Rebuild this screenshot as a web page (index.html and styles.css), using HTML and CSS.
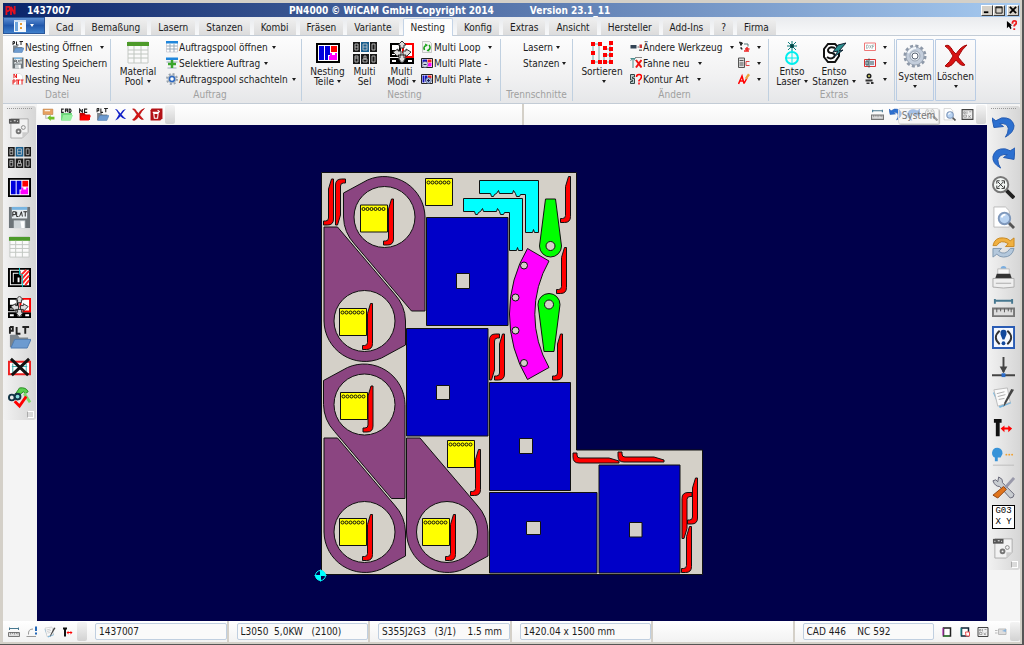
FILE: index.html
```
<!DOCTYPE html>
<html lang="de">
<head>
    <meta charset="UTF-8">
    <meta name="viewport" content="width=device-width, initial-scale=1.0">
    <title>PN4000</title>
    <link rel="stylesheet" href="styles.css">
</head>

<body>
    <!-- icons -->
    <svg class="defs" aria-hidden="true">
        <symbol id="i-folder" viewBox="0 0 24 24">
            <path d="M2 22V9h8l2 3h9v3H8L5 22z" fill="#7d858c"/>
            <path d="M7 14h17l-4 9H3z" fill="#6d9bd0" stroke="#4f7cb2"/>
            <path d="M2 1v7M2 1h3v4H2M9 1v7h4M15 1h7M18 1v7" fill="none" stroke="#222" stroke-width="2"/>
        </symbol>
        <symbol id="i-cadfolder" viewBox="0 0 24 24">
            <path d="M2 22V9h20v5l-3 9H2z" fill="#6fd67c"/>
            <path d="M6 13h18l-4 10H3z" fill="#98f0a0"/>
            <path d="M7 2H3v6h4M10 8V2h4v6M10 5h4M17 2v6h2q3-3 0-6z" fill="none" stroke="#222" stroke-width="2"/>
        </symbol>
        <symbol id="i-ncfolder" viewBox="0 0 24 24">
            <path d="M3 22V9h9l2 3h8v10z" fill="#c00"/>
            <path d="M7 14h17l-4 9H3z" fill="#f00"/>
            <path d="M3 9V2l5 6V2M17 2h-5v6h5" fill="none" stroke="#222" stroke-width="2"/>
        </symbol>
        <symbol id="i-save" viewBox="0 0 24 24">
            <path d="M1 1h22v22H1z" fill="#6d7478"/>
            <path d="M4 1h16v12H4z" fill="#e8eef2"/>
            <path d="M4 1h16v3H4z" fill="#78b4e0"/>
            <path d="M5 6v5M5 6h3v3H5M9 6v5h2M12 11l2-5 1 5M16 6h4M18 6v5" fill="none" stroke="#222"/>
            <path d="M6 15h12v8H6z" fill="#cfd5d8"/>
            <path d="M13 16h4v7h-3z" fill="#fff"/>
        </symbol>
        <symbol id="i-new" viewBox="0 0 24 24">
            <path d="M3 1h13l5 5v17H3z" fill="#fff" stroke="#ccc"/>
            <path d="M4 10V2l5 8V2M2 14v9M2 14h4v4H2M10 14v9M8 14h8M13 14v9M17 14h6M20 14v9" fill="none" stroke="#e22" stroke-width="2"/>
        </symbol>
        <symbol id="i-table" viewBox="0 0 24 24">
            <path d="M2 1h20v21H2z" fill="#fafafa" stroke="#c4c8c4"/>
            <path d="M1 1h22v4H1z" fill="#4d9a2a"/>
            <path d="M2 9h20M2 13h20M2 17h20M8 5v17M15 5v17" stroke="#c0c6c0"/>
        </symbol>
        <symbol id="i-tableblue" viewBox="0 0 24 24">
            <path d="M1 2h22v20H1z" fill="#fff" stroke="#aab"/>
            <path d="M0 0h24v5H0z" fill="#1f86dc"/>
            <path d="M1 10h22M1 16h22M8 5v17M16 5v17" stroke="#9ab" stroke-width="2"/>
        </symbol>
        <symbol id="i-tableplus" viewBox="0 0 24 24">
            <path d="M0 1h24v5H0z" fill="#1f86dc"/>
            <path d="M1 10h22M3 22h18" stroke="#9ab" stroke-width="2"/>
            <path d="M12 6v16M4 14h16" stroke="#39a52b" stroke-width="5"/>
        </symbol>
        <symbol id="i-gear" viewBox="0 0 24 24">
            <circle cx="12" cy="12" r="10" fill="none" stroke="#8d98a8" stroke-width="3" stroke-dasharray="3 2.24"/>
            <circle cx="12" cy="12" r="9" fill="#c3cddb" stroke="#9aa5b4"/>
            <path d="M5 9q3-5 8-5" fill="none" stroke="#f4f8fc" stroke-width="2"/>
            <circle cx="12" cy="12" r="5" fill="#e4eaf1" stroke="#9aa5b4"/>
            <circle cx="12" cy="12" r="3" fill="#fff" stroke="#5a6574"/>
        </symbol>
        <symbol id="i-gearblue" viewBox="0 0 24 24">
            <circle cx="12" cy="12" r="10" fill="none" stroke="#9aa4ae" stroke-width="4" stroke-dasharray="4 3.85"/>
            <circle cx="12" cy="12" r="8" fill="#c8d2dc" stroke="#8a95a0"/>
            <circle cx="12" cy="12" r="5" fill="#fff" stroke="#2c68c0" stroke-width="3"/>
        </symbol>
        <symbol id="i-nest" viewBox="0 0 24 20">
            <path d="M1 1h22v18H1z" fill="#fff" stroke="#000" stroke-width="2"/>
            <path d="M3 3h5v14H3zM9 3h5v9H9zM9 12h3v5H9z" fill="#00d"/>
            <path d="M15 3h6v6h-6z" fill="#f00"/>
            <path d="M14 10h2v2h3v-2h2v7h-8v-4h1z" fill="#f0f"/>
        </symbol>
        <symbol id="i-sel" viewBox="0 0 24 24">
            <path d="M0 1h7v10H0zM17 1h7v10h-7zM0 13h7v10H0zM8 13h8v10H8zM17 13h7v10h-7z" fill="#1a1a1a"/>
            <path d="M8 1h8v10H8z" fill="#1a6090"/>
            <path d="M2 3h3v6H2zM2 6h3M10 3h4v6h-4zM10 6h4M19 3h3v6h-3zM2 15h3v6H2zM2 17h3M11 15h2v3h-2zM10 18h4v3h-4zM19 15h3v6h-3z" fill="none" stroke="#ccc" stroke-width=".8"/>
        </symbol>
        <symbol id="i-modi" viewBox="0 0 24 24">
            <path d="M1 3h9v7H1zM1 12h7v3H1zM1 18h6v4H1zM9 18h6v4H9zM17 18h6v4h-6z" fill="#fff" stroke="#000" stroke-width="2"/>
            <path d="M13 3h10v13h-7v-5h-3z" fill="#fff" stroke="#f00" stroke-width="2"/>
            <path d="M12 0l4 4h-2v3h-4V4H8zM3 11l5-3v2h3v4H8v2zM21 11l-5-3v2h-3v4h3v2zM12 22l-4-5h2v-3h4v3h2z" fill="#ddd" stroke="#333"/>
        </symbol>
        <symbol id="i-loop" viewBox="0 0 24 24">
            <path d="M3 1h14l4 4v18H3z" fill="#f4f4f4" stroke="#999"/>
            <path d="M7 18a7 7 0 0 1 2-9M16 8a7 7 0 0 1 0 10" fill="none" stroke="#16a016" stroke-width="3"/>
            <path d="M8 5l6 3-5 4zM17 21l-6-1 4-5z" fill="#16a016"/>
        </symbol>
        <symbol id="i-minus" viewBox="0 0 24 20">
            <path d="M1 1h22v18H1z" fill="#fff" stroke="#222" stroke-width="2"/>
            <path d="M3 3h9v10H3z" fill="#11b"/>
            <path d="M13 3h8v6h-8z" fill="#e22"/>
            <path d="M15 10h6v7h-8z" fill="#f0f"/>
            <circle cx="8" cy="13" r="6" fill="#cdd6e6" stroke="#446"/>
            <path d="M5 13h6" stroke="#225" stroke-width="2"/>
        </symbol>
        <symbol id="i-plus" viewBox="0 0 24 20">
            <path d="M1 1h22v18H1z" fill="#fff" stroke="#222" stroke-width="2"/>
            <path d="M3 3h4v14H3zM8 3h5v12H8z" fill="#11b"/>
            <path d="M14 3h7v6h-7z" fill="#e22"/>
            <circle cx="15" cy="13" r="6" fill="#9db4dc" stroke="#446"/>
            <path d="M12 13h6M15 10v6" stroke="#225" stroke-width="2"/>
        </symbol>
        <symbol id="i-sort" viewBox="0 0 24 24">
            <path d="M3 3h6v18H3zM20 2v19h-6v-7h6M14 8h6" fill="none" stroke="#7aa" stroke-width="1"/>
            <path d="M1 1h4v4H1zM8 1h4v4H8zM1 10h4v4H1zM1 19h4v4H1zM8 19h4v4H8zM19 0h4v4h-4zM13 5h4v4h-4zM19 6h4v4h-4zM13 12h4v4h-4zM19 12h4v4h-4zM13 19h4v4h-4zM19 19h4v4h-4z" fill="#f00"/>
        </symbol>
        <symbol id="i-tool" viewBox="0 0 24 24">
            <path d="M1 8h12v7H1z" fill="#345"/>
            <path d="M15 12h3" stroke="#666" stroke-width="2"/>
            <path d="M19 7h5v7h-5z" fill="#c33"/>
            <path d="M18 17h6v3h-6z" fill="#777"/>
        </symbol>
        <symbol id="i-flag" viewBox="0 0 24 24">
            <path d="M1 3h10M6 3v19M1 7l5-4 5 4" fill="none" stroke="#4a8d8d" stroke-width="2"/>
            <path d="M12 6l11 15M23 6L12 21" stroke="#e11" stroke-width="4"/>
            <path d="M10 1h14" stroke="#888" stroke-width="2"/>
        </symbol>
        <symbol id="i-kontur" viewBox="0 0 24 24">
            <path d="M1 3h8v5H5v3h4v10H1v-4h4v-3H1z" fill="#bcc" stroke="#344" stroke-width="2"/>
            <path d="M13 8q0-5 5-5t5 4-5 8v2M18 19v4" fill="none" stroke="#f00" stroke-width="3"/>
        </symbol>
        <symbol id="i-move" viewBox="0 0 24 24">
            <path d="M3 2l6 2-3 5zM6 12v4h3" fill="#222" stroke="#222" stroke-width="2"/>
            <path d="M18 12v8M14 16h9M12 20h10" stroke="#e22" stroke-width="3"/>
            <path d="M12 6h8v5" fill="none" stroke="#577" stroke-width="2"/>
        </symbol>
        <symbol id="i-list" viewBox="0 0 24 24">
            <path d="M1 2h12v19H1z" fill="#ddd" stroke="#555" stroke-width="2"/>
            <path d="M3 7h8M3 12h8M3 16h8" stroke="#555" stroke-width="2"/>
            <path d="M23 9h-7v8h7" fill="none" stroke="#d44" stroke-width="2"/>
        </symbol>
        <symbol id="i-pen" viewBox="0 0 24 24">
            <path d="M1 22L8 6l4 15M4 16h7M12 21l6-11" fill="none" stroke="#f00" stroke-width="3"/>
            <path d="M14 10l6-9 4 3-7 9z" fill="#eba23a"/>
        </symbol>
        <symbol id="i-laser" viewBox="0 0 24 24">
            <path d="M12 0v10M7 5h10M8 1l8 8M16 1L8 9" stroke="#0c7c7c" stroke-width="1"/>
            <circle cx="12" cy="5" r="2" fill="#044"/>
            <path d="M12 9v14M5 17h14" stroke="#0ee" stroke-width="1"/>
            <circle cx="12" cy="17" r="6" fill="none" stroke="#0ee" stroke-width="2"/>
        </symbol>
        <symbol id="i-punch" viewBox="0 0 24 24">
            <path d="M6 3h7l4 4v8l-4 6H6l-4-5V8z" fill="#fff" stroke="#111" stroke-width="2"/>
            <path d="M13 7q-6-2-7 2 0 3 4 3 4 1 2 4-3 3-7 0" fill="none" stroke="#111" stroke-width="2"/>
            <path d="M24 2l-8 2-5 7 5-1-4 6 9-7-4 1z" fill="#2a9090" stroke="#123"/>
        </symbol>
        <symbol id="i-dxf" viewBox="0 0 24 24">
            <path d="M1 4h22v15H1z" fill="#fff" stroke="#e77" stroke-width="2"/>
            <path d="M5 8v7q4 0 4-4t-4-3M11 8l4 7M15 8l-4 7M17 15V8h4M17 11h3" fill="none" stroke="#688" stroke-width="1"/>
        </symbol>
        <symbol id="i-strip" viewBox="0 0 24 24">
            <path d="M1 5h22v14H1z" fill="#eef" stroke="#d33" stroke-width="2"/>
            <path d="M4 8h4v8H4zM10 3v18M14 8v8M18 8v8" fill="none" stroke="#355" stroke-width="2"/>
        </symbol>
        <symbol id="i-man" viewBox="0 0 24 24">
            <circle cx="10" cy="6" r="5" fill="#222"/>
            <path d="M3 13h14v4H3zM5 19h6v3H5zM14 18h5v4h-5z" fill="#333"/>
            <circle cx="10" cy="6" r="2" fill="#dd6"/>
        </symbol>
        <symbol id="i-redx" viewBox="0 0 24 24">
            <path d="M1 2q4-3 8 5l3 3q5-8 11-9-5 4-9 12 4 5 7 8-4 2-9-5-4 6-8 7l-3-1q5-4 8-10Q5 4 1 2z" fill="#d81313" stroke="#a30808"/>
        </symbol>
        <symbol id="i-bluex" viewBox="0 0 24 24">
            <path d="M2 2q4-1 7 5l3 3q4-7 10-8-4 4-8 10 4 5 8 8-4 2-10-5-4 6-10 8 4-5 7-11-3-6-7-10z" fill="#1020c8"/>
        </symbol>
        <symbol id="i-export" viewBox="0 0 24 24">
            <path d="M2 2h18v10H2z" fill="#e6a060" stroke="#b87438"/>
            <path d="M5 5h10" stroke="#fff" stroke-width="2"/>
            <path d="M7 12v7h6" fill="none" stroke="#bbb" stroke-width="2"/>
            <path d="M10 18l6-5v3h7v5h-7v3z" fill="#6cc024"/>
        </symbol>
        <symbol id="i-trash" viewBox="0 0 24 24">
            <path d="M3 1h20v18l-4 4H1V4z" fill="#b31217"/>
            <path d="M7 10h8l-1 9H8zM5 8h12M14 4l4 3" fill="none" stroke="#fff" stroke-width="2"/>
        </symbol>
        <symbol id="i-doc" viewBox="0 0 24 24">
            <path d="M3 3h18v14l-6 6H3z" fill="#f2f2f2" stroke="#aaa"/>
            <path d="M21 17h-6v6z" fill="#ccc"/>
            <path d="M1 3h11v5H1z" fill="#555"/>
            <path d="M3 5v1M6 5h2M10 5v1" stroke="#fff"/>
            <circle cx="16" cy="12" r="2" fill="none" stroke="#888" stroke-width="1"/>
            <circle cx="11" cy="16" r="2" fill="none" stroke="#777" stroke-width="2"/>
        </symbol>
        <symbol id="i-hatch" viewBox="0 0 24 20">
            <path d="M1 1h22v18H1z" fill="#fff" stroke="#000" stroke-width="2"/>
            <path d="M4 4h8v3H7v9H4zM9 9h4v7H9z" fill="#fff" stroke="#000" stroke-width="2"/>
            <path d="M13 8l6-6M14 12l8-9M15 16l7-8M18 18l4-5" stroke="#f22" stroke-width="2"/>
            <path d="M12 0v7h3v13" fill="none" stroke="#0cc" stroke-width="1"/>
        </symbol>
        <symbol id="i-crossed" viewBox="0 0 24 24">
            <path d="M1 6h22v13H1z" fill="#fff" stroke="#e22" stroke-width="2"/>
            <path d="M4 11h16M5 8v9M19 8v9" stroke="#3aa" stroke-width="1"/>
            <path d="M3 3l18 17M22 3L4 20" stroke="#111" stroke-width="3"/>
        </symbol>
        <symbol id="i-check" viewBox="0 0 24 24">
            <path d="M12 2q7-1 9 4l-3 2-2-2-6 5-2-3z" fill="#59d04e" stroke="#278a20"/>
            <path d="M17 8l6 9" stroke="#7ddb6c" stroke-width="3"/>
            <circle cx="4" cy="12" r="3" fill="none" stroke="#134" stroke-width="2"/>
            <circle cx="10" cy="11" r="3" fill="#8dd" stroke="#134" stroke-width="2"/>
            <path d="M7 16l5 5 7-10" fill="none" stroke="#f00" stroke-width="3"/>
        </symbol>
        <symbol id="i-undo" viewBox="0 0 24 24">
            <path d="M0 2l2 10 10-1-4-3q8-1 9 5 0 5-3 9 9-5 9-12-2-9-13-8L4 5z" fill="#2c70d0" stroke="#2058b0"/>
        </symbol>
        <symbol id="i-redo" viewBox="0 0 24 24">
            <path d="M24 2l-1 12-11-2 4-3Q8 8 6 14q0 5 3 9-9-5-8-12Q3 2 14 3l5 2z" fill="#2c70d0" stroke="#2058b0"/>
        </symbol>
        <symbol id="i-fit" viewBox="0 0 24 24">
            <path d="M15 15l8 8" stroke="#222" stroke-width="4"/>
            <circle cx="9" cy="9" r="8" fill="#f2f6f4" stroke="#777" stroke-width="2"/>
            <path d="M5 8V5h3M10 5h3v3M13 10v3h-3M8 13H5v-3M6 6l6 6M12 6l-6 6" fill="none" stroke="#333"/>
        </symbol>
        <symbol id="i-preview" viewBox="0 0 24 24">
            <path d="M2 1h12l4 4v17H2z" fill="#fff" stroke="#bbb"/>
            <path d="M17 17l6 6" stroke="#555" stroke-width="3"/>
            <circle cx="13" cy="13" r="6" fill="#b8d2f0" stroke="#7f98bb" stroke-width="2"/>
            <path d="M10 12q1-3 4-3" fill="none" stroke="#fff" stroke-width="2"/>
        </symbol>
        <symbol id="i-refresh" viewBox="0 0 24 24">
            <path d="M1 10Q3 1 12 2q4 0 7 3l4-3v9h-9l3-3Q9 3 5 10z" fill="#f0b040" stroke="#c88820"/>
            <path d="M23 13q-2 9-11 9-4 0-7-3l-4 3v-9h9l-3 3q7 5 12-3z" fill="#b4c8dc" stroke="#8098b0"/>
        </symbol>
        <symbol id="i-print" viewBox="0 0 24 24">
            <circle cx="12" cy="3" r="3" fill="#7aaee0"/>
            <path d="M6 3h12v7H6z" fill="#f6f6f6" stroke="#bbb"/>
            <path d="M5 8h14l2 6H3z" fill="#333"/>
            <path d="M1 13h22v9q-11 2-22 0z" fill="#eee" stroke="#aaa"/>
            <path d="M4 18h16" stroke="#aaa"/>
        </symbol>
        <symbol id="i-ruler" viewBox="0 0 24 24">
            <path d="M3 5h18M3 3v5M21 3v5" stroke="#477890" stroke-width="2"/>
            <path d="M1 13h22v8H1z" fill="#ddd" stroke="#777" stroke-width="2"/>
            <path d="M5 13v4M9 13v3M13 13v4M17 13v3M20 13v4" stroke="#555"/>
        </symbol>
        <symbol id="i-alert" viewBox="0 0 24 24">
            <path d="M1 1h22v22H1z" fill="#f4f8ff" stroke="#2a5cb4" stroke-width="2"/>
            <path d="M8 5q-8 7 0 14M16 5q8 7 0 14" fill="none" stroke="#333" stroke-width="2"/>
            <path d="M12 4q4 0 3 5l-2 5h-2L9 9q-1-5 3-5z" fill="#11489c"/>
            <circle cx="12" cy="18" r="2" fill="#11489c"/>
        </symbol>
        <symbol id="i-perp" viewBox="0 0 24 24">
            <path d="M12 1v16M0 20h24" stroke="#444" stroke-width="2"/>
            <path d="M8 11h8l-4 7z" fill="#444"/>
            <path d="M10 18h4v4h-4z" fill="#2c6cc8"/>
        </symbol>
        <symbol id="i-notes" viewBox="0 0 24 24">
            <path d="M1 7l12-4 7 15-12 5z" fill="#70b4e0"/>
            <path d="M2 4l14-2 3 15-13 4z" fill="#fafafa" stroke="#bbb"/>
            <path d="M5 8l8-2M6 11l8-2M7 14l6-1" stroke="#aaa"/>
            <path d="M23 4l-9 15-2 3 1-5 7-14z" fill="#444"/>
        </symbol>
        <symbol id="i-punchmove" viewBox="0 0 24 24">
            <path d="M2 3h8v4H8v14H4V7H2z" fill="#111"/>
            <path d="M9 13l4-3v2h4v-2l4 3-4 4v-3h-4v3z" fill="#f00"/>
        </symbol>
        <symbol id="i-head" viewBox="0 0 24 24">
            <path d="M0 7q1-6 7-5 4 1 4 6l-2 4H6v4H3v-4q-3-1-3-5z" fill="#3893d8"/>
            <circle cx="15" cy="9" r="1" fill="#f0a030"/><circle cx="18" cy="9" r="1" fill="#f0a030"/><circle cx="21" cy="9" r="1" fill="#f0a030"/>
            <path d="M1 20h22" stroke="#bbb"/>
        </symbol>
        <symbol id="i-tools" viewBox="0 0 24 24">
            <path d="M1 5l3-1 2 2 1-5q5 2 4 6l12 12q0 4-4 4L8 11q-5 0-7-6z" fill="#c8ccd0" stroke="#667"/>
            <path d="M23 2l-9 10" stroke="#99a" stroke-width="3"/>
            <path d="M12 11l3 3-9 9-5-3z" fill="#e0741c" stroke="#904410"/>
        </symbol>
        <symbol id="i-grid" viewBox="0 0 24 24">
            <path d="M2 3h20v18H2z" fill="#eee" stroke="#444" stroke-width="2"/>
            <path d="M5 7h3v3H5zM11 6v5M15 7h4M5 13h5v4H5zM13 14l5 4M18 13l-4 5" fill="none" stroke="#666" stroke-width="1"/>
        </symbol>
        <symbol id="i-arc" viewBox="0 0 24 24">
            <path d="M5 17Q4 6 14 6M1 21h19" fill="none" stroke="#999" stroke-width="2"/>
            <path d="M20 1v9M20 13v4" stroke="#2468b8" stroke-width="4"/>
        </symbol>
        <symbol id="i-page" viewBox="0 0 24 24">
            <path d="M5 4h14v16H5z" fill="#fff" stroke="#222" stroke-width="3"/>
            <path d="M4 4v15" stroke="#c3c" stroke-width="2"/>
            <path d="M5 20h12" stroke="#3a3" stroke-width="2"/>
        </symbol>
        <symbol id="i-pagered" viewBox="0 0 24 24">
            <path d="M5 4h14v16H5z" fill="#fff" stroke="#123" stroke-width="3"/>
            <path d="M4 4v15" stroke="#2aa" stroke-width="2"/>
            <path d="M13 12h8v8h-7z" fill="#fff" stroke="#e55" stroke-width="2"/>
        </symbol>
        <symbol id="i-mail" viewBox="0 0 24 24">
            <path d="M7 6h15v11H7zM0 9h5M0 14h5" fill="#ddd" stroke="#bbb" stroke-width="2"/>
            <path d="M14 10l8-4v6z" fill="#8ab4dc"/>
        </symbol>
    </svg>

    <div class="window">
        <header class="titlebar">
            <svg class="logo" viewBox="0 0 12 12"><path d="M1 11V2h3l1 3-3 2M6 11V2l4 8V1" fill="none" stroke="#e01020" stroke-width="2"/></svg>
            <span class="job">1437007</span>
            <span class="product">PN4000 © WiCAM GmbH Copyright 2014</span>
            <span class="version">Version 23.1_11</span>
            <div class="winbuttons">
                <button aria-label="Minimieren"><svg viewBox="0 0 9 9"><path d="M1 7h5" stroke="#000" stroke-width="2"/></svg></button>
                <button aria-label="Maximieren"><svg viewBox="0 0 9 9"><path d="M1 1h7v7H1zM1 2h7" fill="none" stroke="#000"/></svg></button>
                <button aria-label="Schließen" class="close"><svg viewBox="0 0 9 9"><path d="M1 1l7 7M8 1L1 8" stroke="#000" stroke-width="2"/></svg></button>
            </div>
        </header>

        <nav class="tabs">
            <button class="appmenu" aria-label="Menü">
                <svg viewBox="0 0 12 12"><path d="M0 0h12v12H0z" fill="#f4f8fc"/><path d="M1 1h3v10H1z" fill="#6ba4dc"/><path d="M6 3h2v2H6zM6 7h2v2H6z" fill="#e89a30"/><path d="M0 0h12v2H0z" fill="#cfe0f2"/></svg>
                <i class="caret"></i>
            </button>
            <button class="tab">Cad</button>
            <button class="tab">Bemaßung</button>
            <button class="tab">Lasern</button>
            <button class="tab">Stanzen</button>
            <button class="tab">Kombi</button>
            <button class="tab">Fräsen</button>
            <button class="tab">Variante</button>
            <button class="tab active">Nesting</button>
            <button class="tab">Konfig</button>
            <button class="tab">Extras</button>
            <button class="tab">Ansicht</button>
            <button class="tab">Hersteller</button>
            <button class="tab">Add-Ins</button>
            <button class="tab">?</button>
            <button class="tab">Firma</button>
            <button class="help" aria-label="Hilfe"><svg viewBox="0 0 12 12"><path d="M1 1v8l2-2 2 3 1-1-1-3h2z" fill="#000"/><path d="M7 4q0-3 2-3 3 0 2 3L9 6v1M9 9v2" fill="none" stroke="#e22" stroke-width="2"/></svg></button>
        </nav>

        <section class="ribbon">
            <div class="group datei">
                <div class="tools">
                    <div class="rows">
                        <button class="row"><svg><use href="#i-folder"/></svg>Nesting Öffnen<i class="caret"></i></button>
                        <button class="row"><svg><use href="#i-save"/></svg>Nesting Speichern</button>
                        <button class="row"><svg><use href="#i-new"/></svg>Nesting Neu</button>
                    </div>
                </div>
                <h2>Datei</h2>
            </div>
            <div class="group auftrag">
                <div class="tools">
                    <button class="big"><svg><use href="#i-table"/></svg><span>Material</span><span>Pool<i class="caret"></i></span></button>
                    <div class="rows">
                        <button class="row"><svg><use href="#i-tableblue"/></svg>Auftragspool öffnen<i class="caret"></i></button>
                        <button class="row"><svg><use href="#i-tableplus"/></svg>Selektiere Auftrag<i class="caret"></i></button>
                        <button class="row"><svg><use href="#i-gearblue"/></svg>Auftragspool schachteln<i class="caret"></i></button>
                    </div>
                </div>
                <h2>Auftrag</h2>
            </div>
            <div class="group nesting">
                <div class="tools">
                    <button class="big"><svg><use href="#i-nest"/></svg><span>Nesting</span><span>Teile<i class="caret"></i></span></button>
                    <button class="big"><svg><use href="#i-sel"/></svg><span>Multi</span><span>Sel</span></button>
                    <button class="big"><svg><use href="#i-modi"/></svg><span>Multi</span><span>Modi<i class="caret"></i></span></button>
                    <div class="rows">
                        <button class="row"><svg><use href="#i-loop"/></svg>Multi Loop<i class="caret"></i></button>
                        <button class="row"><svg><use href="#i-minus"/></svg>Multi Plate -</button>
                        <button class="row"><svg><use href="#i-plus"/></svg>Multi Plate +</button>
                    </div>
                </div>
                <h2>Nesting</h2>
            </div>
            <div class="group trenn">
                <div class="tools">
                    <div class="rows tight">
                        <button class="row">Lasern<i class="caret"></i></button>
                        <button class="row">Stanzen<i class="caret"></i></button>
                    </div>
                </div>
                <h2>Trennschnitte</h2>
            </div>
            <div class="group aendern">
                <div class="tools">
                    <button class="big"><svg><use href="#i-sort"/></svg><span>Sortieren</span><span><i class="caret"></i></span></button>
                    <div class="rows">
                        <button class="row"><svg><use href="#i-tool"/></svg>Ändere Werkzeug<i class="caret"></i></button>
                        <button class="row"><svg><use href="#i-flag"/></svg>Fahne neu<i class="caret"></i></button>
                        <button class="row"><svg><use href="#i-kontur"/></svg>Kontur Art<i class="caret"></i></button>
                    </div>
                    <div class="rows last">
                        <button class="row" aria-label="Verschieben"><svg><use href="#i-move"/></svg><i class="caret"></i></button>
                        <button class="row" aria-label="Liste"><svg><use href="#i-list"/></svg><i class="caret"></i></button>
                        <button class="row" aria-label="Beschriften"><svg><use href="#i-pen"/></svg><i class="caret"></i></button>
                    </div>
                </div>
                <h2>Ändern</h2>
            </div>
            <div class="group extras">
                <div class="tools">
                    <button class="big"><svg><use href="#i-laser"/></svg><span>Entso</span><span>Laser<i class="caret"></i></span></button>
                    <button class="big"><svg><use href="#i-punch"/></svg><span>Entso</span><span>Stanzen<i class="caret"></i></span></button>
                    <div class="rows last">
                        <button class="row" aria-label="DXF"><svg><use href="#i-dxf"/></svg><i class="caret"></i></button>
                        <button class="row" aria-label="Streifen"><svg><use href="#i-strip"/></svg><i class="caret"></i></button>
                        <button class="row" aria-label="Bediener"><svg><use href="#i-man"/></svg><i class="caret"></i></button>
                    </div>
                </div>
                <h2>Extras</h2>
            </div>
            <button class="boxed"><svg><use href="#i-gear"/></svg>System<i class="caret"></i></button>
            <button class="boxed"><svg><use href="#i-redx"/></svg>Löschen<i class="caret"></i></button>
        </section>

        <main class="work">
            <aside class="side">
                <div class="strip">
                    <button aria-label="Dokument"><svg><use href="#i-doc"/></svg></button>
                    <button aria-label="Multi Sel"><svg><use href="#i-sel"/></svg></button>
                    <button aria-label="Nesting Teile"><svg><use href="#i-nest"/></svg></button>
                    <button aria-label="Platte speichern"><svg><use href="#i-save"/></svg></button>
                    <button aria-label="Material Pool"><svg><use href="#i-table"/></svg></button>
                    <button aria-label="Restplatte"><svg><use href="#i-hatch"/></svg></button>
                    <button aria-label="Multi Modi"><svg><use href="#i-modi"/></svg></button>
                    <button aria-label="Platte öffnen"><svg><use href="#i-folder"/></svg></button>
                    <button aria-label="Platte löschen"><svg><use href="#i-crossed"/></svg></button>
                    <button aria-label="Prüfen"><svg><use href="#i-check"/></svg></button>
                </div>
            </aside>

            <div class="center">
                <div class="quickbar">
                    <div class="quick left">
                        <button aria-label="Exportieren"><svg><use href="#i-export"/></svg></button>
                        <button aria-label="CAD öffnen"><svg><use href="#i-cadfolder"/></svg></button>
                        <button aria-label="NC öffnen"><svg><use href="#i-ncfolder"/></svg></button>
                        <button aria-label="PLT öffnen"><svg><use href="#i-folder"/></svg></button>
                        <button aria-label="CAD löschen"><svg><use href="#i-bluex"/></svg></button>
                        <button aria-label="NC löschen"><svg><use href="#i-redx"/></svg></button>
                        <button aria-label="Papierkorb"><svg><use href="#i-trash"/></svg></button>
                        <i class="grip"></i>
                    </div>
                    <div class="quick right">
                        <button aria-label="Lineal"><svg><use href="#i-ruler"/></svg></button>
                        <button aria-label="Rückgängig"><svg><use href="#i-undo"/></svg></button>
                        <button aria-label="Wiederholen"><svg><use href="#i-redo"/></svg></button>
                        <button aria-label="Zoom"><svg><use href="#i-fit"/></svg></button>
                        <button aria-label="Vorschau"><svg><use href="#i-preview"/></svg></button>
                        <button aria-label="Raster"><svg><use href="#i-grid"/></svg></button>
                        <i class="grip"></i>
                        <span class="tip">System</span>
                    </div>
                </div>

                <div class="canvas">
                    <svg class="plate" viewBox="321 172 382 403">
                        <defs>
                            <g id="arm">
                                <path d="M-41 -24L-17 -37A41 41 0 0 1 40.5 0V94H27L-30 27A41 41 0 0 1 -41 0Z" fill="#8b4581"/>
                                <circle r="30.5" fill="#d4d0c8"/>
                            </g>
                            <g id="square">
                                <path d="M0 0h27v27H0z" fill="#ff0"/>
                                <g fill="none">
                                    <circle cx="3" cy="4" r="1.5"/><circle cx="7" cy="4" r="1.5"/><circle cx="11" cy="4" r="1.5"/>
                                    <circle cx="15" cy="4" r="1.5"/><circle cx="19" cy="4" r="1.5"/><circle cx="23" cy="4" r="1.5"/>
                                </g>
                            </g>
                            <path id="hook" d="M0 0V40Q0 46 -6 46H-10V42H-8Q-5 42 -5 39V10L-2 0Z" fill="#f00"/>
                            <path id="angle" d="M0 0H59V52H55L54 49 53 52H46V14H41L40 16H37L36 13 34 10 33 13H20L19 10 17 13 15 14 14 16H12L11 13H0Z" fill="#0ff"/>
                            <g id="drop">
                                <path d="M-5 -47H5L11 0A11 11 0 0 1 -11 0Z" fill="#0f0"/>
                                <circle r="4.5" fill="#d4d0c8"/>
                            </g>
                        </defs>
                        <g stroke="#111" stroke-width="1">
                            <path d="M321.5 172.5H576.5V450H702.5V574.5H321.5Z" fill="#d4d0c8"/>

                            <use href="#arm" x="384.5" y="217"/>
                            <use href="#arm" transform="translate(364.5 321) rotate(180)"/>
                            <use href="#arm" x="364.5" y="404.5"/>
                            <use href="#arm" transform="translate(364.5 532) rotate(180)"/>
                            <use href="#arm" transform="translate(447 532) rotate(180)"/>

                            <g fill="#0000c8">
                                <path d="M426.5 217.5H508V325.5H426.5ZM456.5 273.5V288.5H469.5V273.5Z"/>
                                <path d="M406.5 328.5H488V436H406.5ZM436.5 385.5V399.5H449.5V385.5Z"/>
                                <path d="M489.5 382.5H570.5V490.5H489.5ZM519.5 438.5V453.5H532.5V438.5Z"/>
                                <path d="M489.5 492.5H597V573H489.5ZM526.5 521.5V534.5H540.5V521.5Z"/>
                                <path d="M599 465H680V573H599ZM629.5 522.5V537H642V522.5Z"/>
                            </g>

                            <use href="#angle" x="479.5" y="180.5"/>
                            <use href="#angle" x="463.5" y="198.5"/>

                            <use href="#drop" x="550.5" y="246"/>
                            <use href="#drop" transform="translate(549 304.5) rotate(180)"/>

                            <path d="M527.5 248.5L549 261A107 107 0 0 0 549 367.5L527.5 379.5A128 128 0 0 1 527.5 248.5Z" fill="#f0f"/>
                            <g fill="#d4d0c8">
                                <circle cx="524" cy="265.5" r="3.5"/>
                                <circle cx="515.5" cy="297.5" r="3.5"/>
                                <circle cx="515.5" cy="330.5" r="3.5"/>
                                <circle cx="524" cy="363" r="3.5"/>
                            </g>

                            <use href="#square" x="425.5" y="178.5"/>
                            <use href="#square" x="360.5" y="205"/>
                            <use href="#square" x="339.5" y="308.5"/>
                            <use href="#square" x="340.5" y="392.5"/>
                            <use href="#square" x="339.5" y="518.5"/>
                            <use href="#square" x="422.5" y="518.5"/>
                            <use href="#square" x="447.5" y="440.5"/>

                            <use href="#hook" x="333.5" y="179"/>
                            <use href="#hook" x="393.5" y="199"/>
                            <use href="#hook" x="372.5" y="303.5"/>
                            <use href="#hook" x="373" y="386"/>
                            <use href="#hook" x="372.5" y="514.5"/>
                            <use href="#hook" x="455.5" y="514.5"/>
                            <use href="#hook" x="480.5" y="449.5"/>
                            <use href="#hook" x="570.5" y="176.5"/>
                            <use href="#hook" x="566.5" y="247.5"/>
                            <use href="#hook" x="562.5" y="334"/>
                            <use href="#hook" x="504.5" y="334"/>
                            <use href="#hook" x="697.5" y="478"/>
                            <use href="#hook" x="691.5" y="526.5"/>
                            <use href="#hook" transform="translate(335.5 225) rotate(180)"/>
                            <use href="#hook" transform="translate(489.5 380) rotate(180)"/>
                            <use href="#hook" transform="translate(682 538.5) rotate(180)"/>
                            <use href="#hook" transform="translate(619 463) rotate(90)"/>
                            <use href="#hook" transform="translate(664 462) rotate(90)"/>
                        </g>
                        <!-- Nullpunkt -->
                        <circle cx="320.5" cy="575.5" r="5" fill="#00004b" stroke="#0ff"/>
                        <path d="M320.5 575.5V570.5A5 5 0 0 1 325.5 575.5ZM320.5 575.5V580.5A5 5 0 0 1 315.5 575.5Z" fill="#0ff"/>
                        <path d="M314.5 575.5h12M320.5 569.5v12" stroke="#0ff"/>
                    </svg>
                </div>
            </div>

            <aside class="side">
                <div class="strip">
                    <button aria-label="Rückgängig"><svg><use href="#i-undo"/></svg></button>
                    <button aria-label="Wiederholen"><svg><use href="#i-redo"/></svg></button>
                    <button aria-label="Alles zeigen"><svg><use href="#i-fit"/></svg></button>
                    <button aria-label="Vorschau"><svg><use href="#i-preview"/></svg></button>
                    <button aria-label="Neu zeichnen"><svg><use href="#i-refresh"/></svg></button>
                    <button aria-label="Drucken"><svg><use href="#i-print"/></svg></button>
                    <button aria-label="Messen"><svg><use href="#i-ruler"/></svg></button>
                    <button aria-label="Hinweis"><svg><use href="#i-alert"/></svg></button>
                    <button aria-label="Lot"><svg><use href="#i-perp"/></svg></button>
                    <button aria-label="Notizen"><svg><use href="#i-notes"/></svg></button>
                    <button aria-label="Werkzeug schieben"><svg><use href="#i-punchmove"/></svg></button>
                    <button aria-label="Info"><svg><use href="#i-head"/></svg></button>
                    <button aria-label="Einstellungen"><svg><use href="#i-tools"/></svg></button>
                    <button class="code"><span>G03</span><span>X Y</span></button>
                    <button aria-label="Dokument"><svg><use href="#i-doc"/></svg></button>
                </div>
            </aside>
        </main>

        <footer class="status">
            <div class="quick">
                <button aria-label="Lineal"><svg><use href="#i-ruler"/></svg></button>
                <button aria-label="Bogen"><svg><use href="#i-arc"/></svg></button>
                <button aria-label="Notizen"><svg><use href="#i-notes"/></svg></button>
                <button aria-label="Werkzeug schieben"><svg><use href="#i-punchmove"/></svg></button>
                <i class="grip"></i>
            </div>
            <div class="cell"><input aria-label="Auftrag" value="1437007" readonly></div>
            <div class="cell"><input aria-label="Maschine" value="L3050  5,0KW   (2100)" readonly></div>
            <div class="cell"><input aria-label="Material" value="S355J2G3   (3/1)    1.5 mm" readonly></div>
            <div class="cell"><input aria-label="Format" value="1420.04 x 1500 mm" readonly></div>
            <div class="cell empty"></div>
            <div class="cell open"><input aria-label="Zähler" value="CAD 446    NC 592" readonly></div>
            <div class="quick">
                <button aria-label="Seite"><svg><use href="#i-page"/></svg></button>
                <button aria-label="Seite rot"><svg><use href="#i-pagered"/></svg></button>
                <button aria-label="Raster"><svg><use href="#i-grid"/></svg></button>
                <button aria-label="Senden"><svg><use href="#i-mail"/></svg></button>
                <i class="grip"></i>
            </div>
        </footer>
    </div>
</body>
</html>
```
FILE: styles.css
```
* {
    box-sizing: border-box;
}

body {
    margin: 0;
    background-color: #d4d0c8;
    color: #1c1c1c;
    font-family: "DejaVu Sans Condensed", "DejaVu Sans", sans-serif;
    font-size: 10px;
}

button {
    margin: 0;
    padding: 0;
    border: none;
    background: none;
    color: inherit;
    font: inherit;
    white-space: nowrap;
}

.defs {
    display: none;
}

.window {
    display: flex;
    flex-direction: column;
    min-height: 100vh;
    padding: 3px 2px 1px 3px;
    border-right: 2px solid #555;
    border-bottom: 1px solid #555;
}

.caret {
    display: inline-block;
    border: 2px solid transparent;
    border-top: 3px solid #1c1c1c;
    border-bottom: none;
}

/* Titelzeile */
.titlebar {
    display: flex;
    align-items: center;
    height: 14px;
    color: #fff;
    font-weight: bold;
    background: linear-gradient(to right, #0a246a, #a6caf0);
}

.logo {
    width: 12px;
    height: 11px;
    margin: 0 10px 0 2px;
}

.job {
    width: 262px;
}

.version {
    margin-left: 36px;
}

.winbuttons {
    display: flex;
    margin-left: auto;
}

.winbuttons button {
    width: 12px;
    height: 11px;
    background-color: #d4d0c8;
    border: 1px solid;
    border-color: #fff #404040 #404040 #fff;
    display: flex;
    align-items: center;
    justify-content: center;
}

.winbuttons .close {
    margin: 0 1px 0 2px;
}

.winbuttons svg {
    width: 8px;
    height: 8px;
}

/* Reiter */
.tabs {
    display: flex;
    align-items: flex-end;
    gap: 4px;
    height: 19px;
    background: linear-gradient(#e9ebee, #f8f9fa);
    border-bottom: 1px solid #c3ccd6;
}

.appmenu {
    display: flex;
    align-items: center;
    justify-content: center;
    gap: 4px;
    width: 42px;
    height: 17px;
    align-self: flex-start;
    background: linear-gradient(#5d8fd4, #2258ac 50%, #3f80cc);
    border: 1px solid #2a5698;
}

.appmenu svg {
    width: 12px;
    height: 12px;
}

.appmenu .caret {
    border-top-color: #fff;
}

.tab {
    height: 15px;
    padding: 0 7px;
    background: linear-gradient(#ededed, #dcdcdc);
    border-radius: 2px 2px 0 0;
}

.tab.active {
    height: 18px;
    margin-bottom: -1px;
    background: #fdfdfd;
    border: 1px solid #c3d3e6;
    border-bottom: none;
}

.help {
    width: 12px;
    height: 18px;
    margin: 0 3px 0 auto;
}

.help svg {
    width: 11px;
    height: 11px;
}

/* Ribbon */
.ribbon {
    display: flex;
    height: 68px;
    padding-top: 3px;
    background: linear-gradient(#fdfdfd, #f1f1f2 60%, #e6e7e9);
    border-bottom: 1px solid #c3ccd6;
}

.group {
    display: flex;
    flex-direction: column;
    flex: none;
    height: 62px;
    border-right: 1px solid #c0d0e0;
}

.group h2 {
    margin: 0;
    color: #a0a0a0;
    font-size: 10px;
    font-weight: normal;
    line-height: 12px;
    text-align: center;
}

.tools {
    display: flex;
    height: 50px;
}

.rows {
    display: flex;
    flex-direction: column;
}

.row {
    display: flex;
    align-items: center;
    height: 16px;
}

.row svg {
    width: 12px;
    height: 12px;
    margin-right: 1px;
}

.row .caret {
    margin-left: 8px;
}

.rows.tight .caret {
    margin-left: 3px;
}

.rows.last {
    margin-left: auto;
    padding-right: 7px;
}

.rows.last .caret {
    margin-left: 6px;
}

.big {
    display: flex;
    flex-direction: column;
    align-items: center;
    line-height: 10px;
}

.big svg {
    width: 24px;
    height: 24px;
    margin: 2px 0;
}

.big span {
    height: 10px;
}

.big .caret {
    margin: 0 0 2px 3px;
}

.datei {
    width: 108px;
    padding-left: 9px;
}

.datei h2 {
    padding-right: 8px;
}

.auftrag {
    width: 191px;
    padding-left: 8px;
}

.auftrag .big {
    width: 38px;
    margin-right: 9px;
}

.auftrag .caret {
    margin-left: 4px;
}

.nesting {
    width: 199px;
    padding-left: 7px;
}

.nesting .big {
    width: 37px;
}

.nesting .rows {
    margin-left: 1px;
}

.trenn {
    width: 72px;
}

.trenn .rows {
    padding-left: 22px;
}

.aendern {
    width: 196px;
    padding-left: 8px;
}

.aendern .big {
    width: 42px;
    margin-right: 7px;
}

.extras {
    width: 126px;
    padding-left: 5px;
}

.extras .big {
    width: 36px;
}

.extras .big + .big {
    width: 48px;
}

.boxed {
    display: flex;
    flex-direction: column;
    align-items: center;
    width: 38px;
    height: 62px;
    margin-left: 1px;
    padding-top: 4px;
    border: 1px solid #b9cce4;
    border-radius: 1px;
}

.boxed svg {
    width: 24px;
    height: 24px;
    margin-bottom: 3px;
}

.boxed + .boxed {
    width: 41px;
}

.boxed .caret {
    margin-top: 3px;
}

/* Arbeitsbereich */
.work {
    display: flex;
    flex: 1;
    background-color: #f4f4f4;
}

.side {
    flex: none;
    width: 34px;
    padding: 2px 1px 0 0;
}

.center + .side {
    width: 33px;
    padding-right: 0;
}

.strip {
    display: flex;
    flex-direction: column;
    padding: 6px 0 8px;
    background: linear-gradient(to right, #f2f2f2, #d6d6d6);
    border-radius: 3px;
    position: relative;
}

.strip::before {
    content: "";
    position: absolute;
    top: 2px;
    left: 4px;
    right: 4px;
    border-top: 1px dotted #999;
}

.strip::after {
    content: "";
    position: absolute;
    right: 2px;
    bottom: 2px;
    width: 5px;
    height: 5px;
    border: 1px solid #fff;
    border-left-color: #aaa;
}

.strip button {
    display: flex;
    align-items: center;
    justify-content: center;
    height: 30px;
}

.strip svg {
    width: 23px;
    height: 23px;
}

.strip .code {
    flex-direction: column;
    width: 23px;
    height: 24px;
    margin: 3px auto;
    border: 1px solid #000;
    background-color: #fff;
    color: #000;
    font-family: "Liberation Mono", monospace;
    font-size: 9px;
    line-height: 11px;
}

.center {
    display: flex;
    flex: 1;
    flex-direction: column;
}

.quickbar {
    display: flex;
    height: 21px;
    background: linear-gradient(#fff, #f4f4f4);
}

.quick {
    display: flex;
    align-items: center;
    position: relative;
}

.quick button {
    width: 18px;
    height: 18px;
}

.quick svg {
    display: block;
    width: 13px;
    height: 13px;
    margin: 0 auto;
}

.quick.left {
    width: 51%;
    padding-left: 2px;
}

.quick.right {
    flex: 1;
    justify-content: flex-end;
    padding-right: 1px;
    border-left: 2px solid #d4d0c8;
}

.grip {
    width: 10px;
    height: 19px;
    background: linear-gradient(#f4f4f4, #d2d2d2);
    border-radius: 2px;
}

.tip {
    position: absolute;
    top: 4px;
    right: 48px;
    width: 41px;
    height: 16px;
    color: #777;
    line-height: 13px;
    text-align: center;
    background-color: rgba(245, 245, 245, 0.6);
    border: 1px solid #ddd;
    border-radius: 2px;
    box-shadow: 1px 1px 1px #bbb;
}

.canvas {
    display: flex;
    flex: 1;
    align-items: center;
    justify-content: center;
    background-color: #00004b;
}

.plate {
    width: 382px;
    height: 403px;
    overflow: visible;
}

/* Statuszeile */
.status {
    display: flex;
    height: 22px;
    background: linear-gradient(#fff, #f2f2f2);
    border-bottom: 1px solid #d4d0c8;
}

.status > .quick:first-child {
    padding: 0 0 0 2px;
}

.status .quick svg {
    width: 12px;
    height: 12px;
}

.cell {
    flex: 1;
    display: flex;
    align-items: center;
    padding-left: 8px;
    border-right: 2px solid #d4d0c8;
}

.cell input {
    width: 100%;
    height: 17px;
    padding: 0 3px;
    border: 1px solid #c0cfe0;
    border-radius: 2px;
    background-color: #fafafa;
    color: inherit;
    font: inherit;
    outline: none;
}

.cell.open {
    border-right: none;
    padding-right: 4px;
}
```
